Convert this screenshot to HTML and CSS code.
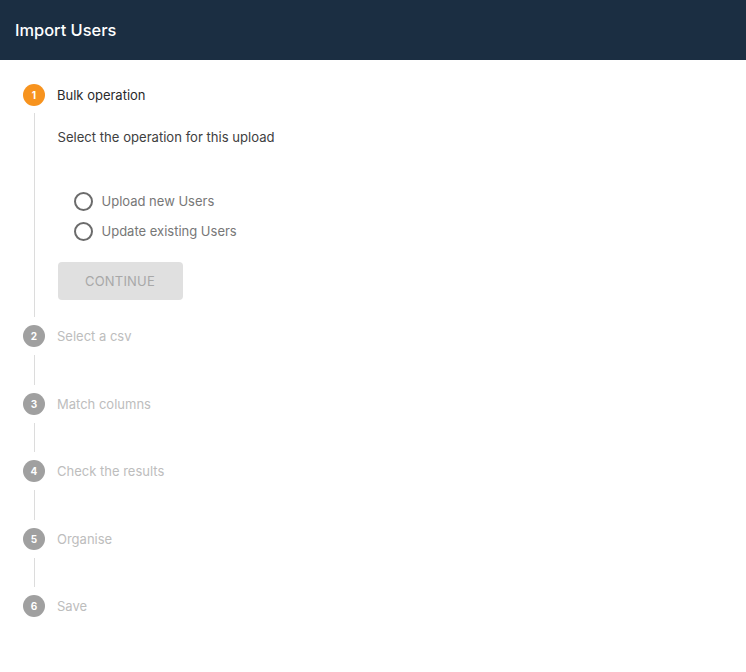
FILE: index.html
```html
<!DOCTYPE html>
<html>
<head>
<meta charset="utf-8">
<link rel="stylesheet" href="styles.css">
</head>
<body>
<div class="dialog">
  <header class="header"><h1 class="title">Import Users</h1></header>
  <main class="body">
    <div class="step active">
      <div class="step-head"><span class="num">1</span><span class="label">Bulk operation</span></div>
      <div class="step-content">
        <p class="desc">Select the operation for this upload</p>
        <div class="radios">
          <label class="radio-row"><span class="radio"></span><span class="radio-label">Upload new Users</span></label>
          <label class="radio-row"><span class="radio"></span><span class="radio-label">Update existing Users</span></label>
        </div>
        <button class="btn" disabled>CONTINUE</button>
      </div>
    </div>
    <div class="step">
      <div class="step-head"><span class="num">2</span><span class="label">Select a csv</span></div>
    </div>
    <div class="connector"></div>
    <div class="step">
      <div class="step-head"><span class="num">3</span><span class="label">Match columns</span></div>
    </div>
    <div class="connector"></div>
    <div class="step">
      <div class="step-head"><span class="num">4</span><span class="label">Check the results</span></div>
    </div>
    <div class="connector"></div>
    <div class="step">
      <div class="step-head"><span class="num">5</span><span class="label">Organise</span></div>
    </div>
    <div class="connector"></div>
    <div class="step">
      <div class="step-head"><span class="num">6</span><span class="label">Save</span></div>
    </div>
  </main>
</div>
</body>
</html>
```
FILE: styles.css
```css
* { box-sizing: border-box; }
html, body { margin: 0; padding: 0; }
body {
  font-family: Inter, "Noto Sans", "Liberation Sans", sans-serif;
  background: #ffffff;
  width: 746px;
  height: 672px;
  overflow: hidden;
}
.dialog { display: flex; flex-direction: column; height: 672px; }
.header {
  height: 60px;
  background: #1b2e42;
  display: flex;
  align-items: center;
  padding: 0 15px;
  flex: none;
}
.title {
  margin: 0;
  color: #ffffff;
  font-size: 16.4px;
  font-weight: 500;
  line-height: 20px;
}
.body {
  flex: 1;
  background: #fff;
  padding: 24px 23px 0;
  display: flex;
  flex-direction: column;
}
.step-head {
  display: flex;
  align-items: center;
  height: 22px;
  gap: 12px;
}
.num {
  width: 22px;
  height: 22px;
  border-radius: 50%;
  background: #a0a0a0;
  color: #fff;
  font-size: 10px;
  font-weight: 700;
  display: flex;
  align-items: center;
  justify-content: center;
  flex: none;
}
.active .num { background: #f7931e; }
.label {
  font-size: 13px;
  color: #bdbdbd;
  line-height: 16px;
}
.active .label { color: #2a2a2a; }
.step-content {
  margin: 7px 0 8px 10.5px;
  border-left: 1px solid #dcdcdc;
  padding: 16px 0 17px 23px;
  display: flex;
  flex-direction: column;
  align-items: flex-start;
}
.desc {
  margin: 0;
  font-size: 13.1px;
  line-height: 16px;
  color: #404040;
}
.radios {
  margin-top: 41px;
  padding-left: 16px;
  display: flex;
  flex-direction: column;
}
.radio-row {
  display: flex;
  align-items: center;
  height: 30px;
  gap: 9px;
}
.radio {
  width: 19px;
  height: 19px;
  border: 2px solid #6b6b6b;
  border-radius: 50%;
  flex: none;
}
.radio-label {
  font-size: 13px;
  color: #777;
}
.btn {
  margin-top: 16px;
  width: 125px;
  height: 38px;
  border: none;
  border-radius: 4px;
  background: #e0e0e0;
  color: #a8a8a8;
  font-family: inherit;
  font-size: 13px;
  letter-spacing: 0.2px;
  padding: 0;
}
.connector {
  margin: 8px 0 8px 10.5px;
  height: 29.5px;
  border-left: 1px solid #dcdcdc;
}
```
